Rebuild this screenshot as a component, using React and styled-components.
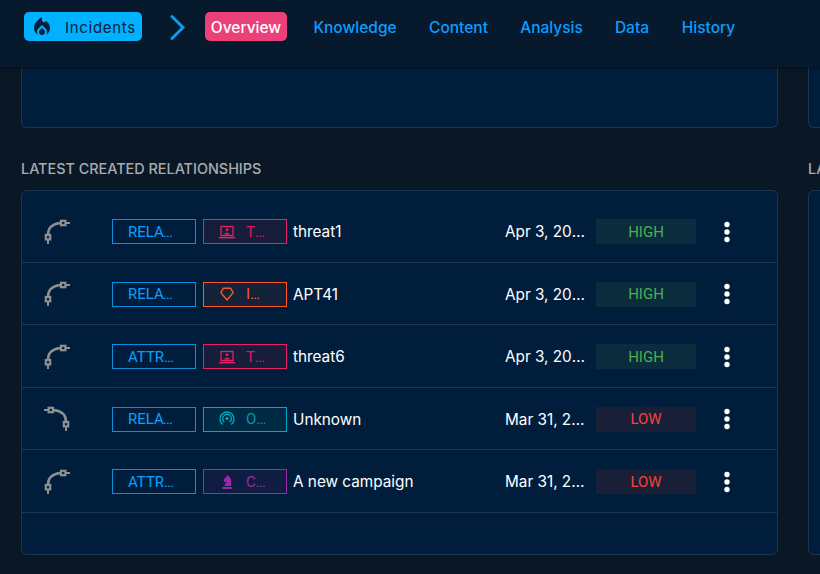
import React from "react";
import styled, { createGlobalStyle } from "styled-components";
import { MdLocalFireDepartment } from "react-icons/md";

const Global = createGlobalStyle`
  html, body { margin: 0; padding: 0; background: #0a1825; }
  body { font-family: Inter, "Liberation Sans", sans-serif; }
`;

const Page = styled.div`
  width: 820px;
  height: 574px;
  overflow: hidden;
  display: flex;
  flex-direction: column;
  background: #0a1825;
`;

const Header = styled.header`
  flex: 0 0 67px;
  box-sizing: border-box;
  height: 67px;
  padding: 12px 0 0 24px;
  background: #07192c;
  box-shadow: 0 1px 3px rgba(0, 0, 0, 0.55);
  display: flex;
  align-items: flex-start;
  position: relative;
  z-index: 2;
`;

const EntityChip = styled.div`
  width: 118px;
  height: 29px;
  box-sizing: border-box;
  padding: 1px 0 0 6px;
  border-radius: 5px;
  background: #00b1ff;
  color: #07203a;
  display: flex;
  align-items: center;
  gap: 11px;
  font-size: 15px;
  letter-spacing: 0.7px;
  svg { flex: none; margin-top: -1px; }
`;

const Arrow = styled.svg`
  width: 16px;
  height: 26px;
  margin: 2px 19px 0 28px;
  flex: none;
`;

const Tabs = styled.nav`
  display: flex;
  gap: 20.5px;
`;

const Tab = styled.div`
  height: 29px;
  box-sizing: border-box;
  padding-top: 1px;
  width: ${(p) => p.$w}px;
  display: flex;
  align-items: center;
  justify-content: center;
  border-radius: 5px;
  font-size: 15.5px;
  font-weight: 500;
  white-space: nowrap;
  color: ${(p) => (p.$active ? "#ffffff" : "#0a9fff")};
  background: ${(p) => (p.$active ? "#ec407a" : "transparent")};
`;

const Main = styled.main`
  flex: 1;
  min-height: 0;
  padding-left: 21px;
  display: grid;
  grid-template-columns: 757px 757px;
  grid-template-rows: 61px 62px 365px;
  column-gap: 30px;
`;

const Panel = styled.section`
  box-sizing: border-box;
  background: #001e3c;
  border: 1px solid #1b3651;
  border-radius: ${(p) => (p.$clipped ? "0 0 6px 6px" : "6px")};
  ${(p) => p.$clipped && "border-top: 0;"}
  padding-top: ${(p) => (p.$clipped ? 0 : 9.3)}px;
`;

const SectionTitle = styled.h2`
  margin: 0;
  padding-top: 32px;
  font-size: 14.4px;
  line-height: 18px;
  font-weight: 500;
  text-transform: uppercase;
  color: #a8abae;
  white-space: nowrap;
`;

const Row = styled.div`
  height: 62.5px;
  box-sizing: border-box;
  padding-top: 1px;
  border-bottom: 1px solid #1b3651;
  display: flex;
  align-items: center;
  color: #fff;
`;

const RelIcon = styled.svg`
  width: 30px;
  height: 30px;
  margin: 0 40px 0 20px;
  flex: none;
`;

const Chip = styled.div`
  width: 84px;
  height: 25px;
  box-sizing: border-box;
  flex: none;
  margin-right: 7px;
  padding-left: 15px;
  border: 1px solid ${(p) => p.$color};
  color: ${(p) => p.$text || p.$color};
  background: ${(p) => p.$bg || "transparent"};
  display: flex;
  align-items: center;
  font-family: Roboto, "Liberation Sans", sans-serif;
  font-size: 15px;
  svg { flex: none; margin-right: 11px; }
`;

const ChipLabel = styled.span`
  display: block;
  width: ${(p) => p.$w}px;
  overflow: hidden;
  white-space: nowrap;
  text-overflow: ellipsis;
`;

const Name = styled.div`
  width: 212px;
  flex: none;
  margin-left: -1px;
  font-size: 15.3px;
  white-space: nowrap;
  overflow: hidden;
`;

const DateCell = styled.div`
  width: 81px;
  flex: none;
  margin-right: 10px;
  font-size: 15.3px;
  white-space: nowrap;
  overflow: hidden;
  text-overflow: ellipsis;
`;

const Severity = styled.div`
  width: 100px;
  height: 25px;
  flex: none;
  display: flex;
  align-items: center;
  justify-content: center;
  font-family: Roboto, "Liberation Sans", sans-serif;
  font-size: 15px;
  color: ${(p) => (p.$high ? "#4caf50" : "#f44336")};
  background: ${(p) => (p.$high ? "#0b2c3d" : "#191f37")};
`;

const Menu = styled.svg`
  width: 12px;
  height: 24px;
  margin-left: 25px;
  flex: none;
`;

const RelationIcon = ({ flipped }) => (
  <RelIcon viewBox="0 0 30 30" fill="none" stroke="#8d8f91" strokeWidth="2.2">
    <g transform={flipped ? "translate(30 0) scale(-1 1)" : undefined}>
      <path d="M6 18 C6 11 10 7 18 6" strokeWidth="2.6" />
      <rect x="3.8" y="18" width="4.4" height="4.4" />
      <rect x="19" y="3.8" width="4.4" height="4.4" />
      <path d="M6 23 V27 M24 6 H28" strokeWidth="2" />
    </g>
  </RelIcon>
);

const LaptopAccount = ({ color }) => (
  <svg width="16" height="16" viewBox="0 0 16 16" fill="none" stroke={color}>
    <rect x="2" y="2.5" width="12" height="9" strokeWidth="1.3" />
    <circle cx="8" cy="5.8" r="1.4" fill={color} stroke="none" />
    <path d="M5.2 10.5 C5.5 8.2 10.5 8.2 10.8 10.5 Z" fill={color} stroke="none" />
    <path d="M0 13.6 H16" strokeWidth="1.5" />
  </svg>
);

const DiamondIcon = ({ color }) => (
  <svg width="16" height="16" viewBox="0 0 16 16" fill="none" stroke={color} strokeWidth="1.4">
    <path d="M4.5 2.2 H11.5 L14.2 6.6 L8 14 L1.8 6.6 Z" strokeLinejoin="round" />
  </svg>
);

const SignalIcon = ({ color }) => (
  <svg width="16" height="16" viewBox="0 0 16 16" fill="none" stroke={color} strokeWidth="1.3">
    <path d="M3.8 13.6 A7 7 0 1 1 12.2 13.6" />
    <path d="M5.3 10.9 A4.3 4.3 0 1 1 10.7 10.9" />
    <circle cx="8" cy="7.6" r="1.5" fill={color} stroke="none" />
  </svg>
);

const KnightIcon = ({ color }) => (
  <svg width="16" height="16" viewBox="0 0 16 16" fill={color}>
    <path d="M7.6 0.8 L8.8 1.8 C11.2 2.6 12.2 5.2 12.2 7.6 V12 H5.4 C5.6 9.8 7.6 9 7.8 7.6 L6.4 8.2 L4.8 7.4 L5.2 4.8 L7.6 2.8 Z" />
    <rect x="3.4" y="13" width="9.2" height="2" />
  </svg>
);

const rows = [
  { rel: "RELATED-TO", Icon: LaptopAccount, type: "Threat-Actor", color: "#e91e63", text: "#d81b60", bg: "#161e3c", name: "threat1", date: "Apr 3, 2024", high: true },
  { rel: "RELATED-TO", Icon: DiamondIcon, type: "Intrusion-Set", color: "#ff5722", bg: "#14223a", name: "APT41", date: "Apr 3, 2024", high: true },
  { rel: "ATTRIBUTED-TO", Icon: LaptopAccount, type: "Threat-Actor", color: "#e91e63", text: "#d81b60", bg: "#161e3c", name: "threat6", date: "Apr 3, 2024", high: true },
  { rel: "RELATED-TO", Icon: SignalIcon, type: "Organization", color: "#00acc1", text: "#0097ad", bg: "#002a43", name: "Unknown", date: "Mar 31, 2024", high: false, flipped: true },
  { rel: "ATTRIBUTED-TO", Icon: KnightIcon, type: "Campaign", color: "#9c27b0", bg: "#101d43", name: "A new campaign", date: "Mar 31, 2024", high: false },
];

const tabs = [
  ["Overview", 82, true],
  ["Knowledge", 95],
  ["Content", 71],
  ["Analysis", 74],
  ["Data", 46],
  ["History", 66],
];

export default function App() {
  return (
    <Page>
      <Global />
      <Header>
        <EntityChip>
          <MdLocalFireDepartment size={24} color="#07203a" />
          Incidents
        </EntityChip>
        <Arrow viewBox="0 0 16 26" fill="none" stroke="#0b9be8" strokeWidth="3">
          <path d="M2 2.5 L13 13.5 L2 24.5" strokeLinecap="round" />
        </Arrow>
        <Tabs>
          {tabs.map(([label, w, active]) => (
            <Tab key={label} $w={w} $active={active}>{label}</Tab>
          ))}
        </Tabs>
      </Header>
      <Main>
        <Panel $clipped />
        <Panel $clipped />
        <SectionTitle>Latest created relationships</SectionTitle>
        <SectionTitle>Latest containers</SectionTitle>
        <Panel>
          {rows.map((r, i) => (
            <Row key={i}>
              <RelationIcon flipped={r.flipped} />
              <Chip $color="#0b8fdc" $text="#0aa0ff">
                <ChipLabel $w={49}>{r.rel}</ChipLabel>
              </Chip>
              <Chip $color={r.color} $text={r.text} $bg={r.bg}>
                <r.Icon color={r.color} />
                <ChipLabel $w={22}>{r.type}</ChipLabel>
              </Chip>
              <Name>{r.name}</Name>
              <DateCell>{r.date}</DateCell>
              <Severity $high={r.high}>{r.high ? "HIGH" : "LOW"}</Severity>
              <Menu viewBox="0 0 12 24" fill="#fff">
                <circle cx="6" cy="4.5" r="2.7" />
                <circle cx="6" cy="12" r="2.7" />
                <circle cx="6" cy="19.5" r="2.7" />
              </Menu>
            </Row>
          ))}
        </Panel>
        <Panel />
      </Main>
    </Page>
  );
}
